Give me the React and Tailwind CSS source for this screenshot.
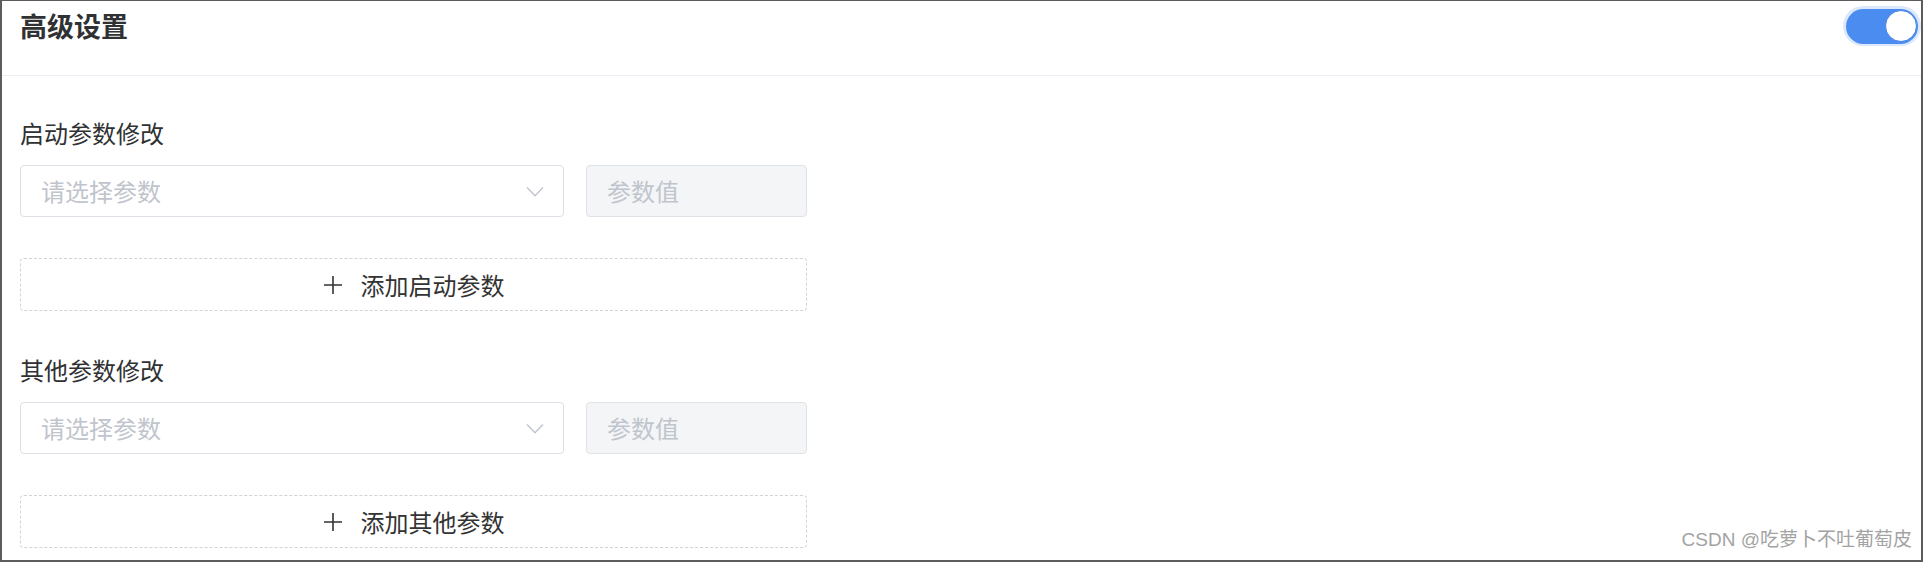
import React from "react";

const font = { fontFamily: '"Noto Sans CJK SC", "Noto Sans", sans-serif' };

const Chevron = () => (
  <svg width="18" height="11" viewBox="0 0 18 11" fill="none">
    <path d="M1 1.5 L9 9.8 L17 1.5" stroke="#c0c4cc" strokeWidth="1.4" />
  </svg>
);

const Plus = () => (
  <svg width="20" height="20" viewBox="0 0 20 20" fill="none">
    <path d="M10 1 V19 M1 10 H19" stroke="#333" strokeWidth="1.6" />
  </svg>
);

const ParamSection = ({ label, button, className }) => (
  <div className={className}>
    <div className="h-8 leading-8 text-[24px] text-[#303133]">{label}</div>
    {/* 参数选择行 */}
    <div className="mt-4 flex gap-[22px]">
      <div className="w-[544px] h-[52px] flex items-center justify-between pl-5 pr-[19px] bg-white border border-[#dcdfe6] rounded-[4px]">
        <span className="text-[24px] text-[#c0c4cc]">请选择参数</span>
        <Chevron />
      </div>
      <div className="w-[221px] h-[52px] flex items-center pl-5 bg-[#f3f5f7] border border-[#dfe2e7] rounded-[4px]">
        <span className="text-[24px] text-[#c0c4cc]">参数值</span>
      </div>
    </div>
    <div className="mt-[41px] w-[787px] h-[53px] flex items-center justify-center gap-[18px] border border-dashed border-[#cfd3da] rounded-[4px] bg-white">
      <Plus />
      <span className="text-[24px] text-[#333]">{button}</span>
    </div>
  </div>
);

export default function App() {
  return (
    <div className="w-[1926px] h-[562px] bg-white" style={font}>
      <div className="relative w-[1923px] h-[562px] border-t border-l-2 border-r-2 border-b-2 border-[#5c5c5c] overflow-hidden">
        {/* Header */}
        <div className="h-[75px] border-b border-[#ebeef5] pl-[18px] pr-0">
          <div className="h-[50px] flex items-center justify-between">
            <span className="text-[27px] font-semibold text-[#303133]">高级设置</span>
            <div className="w-[78px] h-[40px] rounded-full bg-[#dce8fb] flex items-center justify-center">
              <div className="w-[72px] h-[35px] rounded-full bg-[#4b8cf0] flex items-center justify-end pr-[1px]">
                <div className="w-[32px] h-[32px] rounded-full bg-white border border-[#3f7fe6]" />
              </div>
            </div>
          </div>
        </div>

        {/* 内容 */}
        <div className="pl-[18px]">
          <ParamSection className="pt-[41px]" label="启动参数修改" button="添加启动参数" />
          <ParamSection className="pt-[43px]" label="其他参数修改" button="添加其他参数" />
        </div>

        <div
          className="absolute right-[9px] bottom-[8px] text-[19px] text-[#a3a3a3] leading-6"
          style={{ fontFamily: '"Liberation Sans", "Noto Sans CJK SC", sans-serif' }}
        >
          CSDN @吃萝卜不吐葡萄皮
        </div>
      </div>
    </div>
  );
}
